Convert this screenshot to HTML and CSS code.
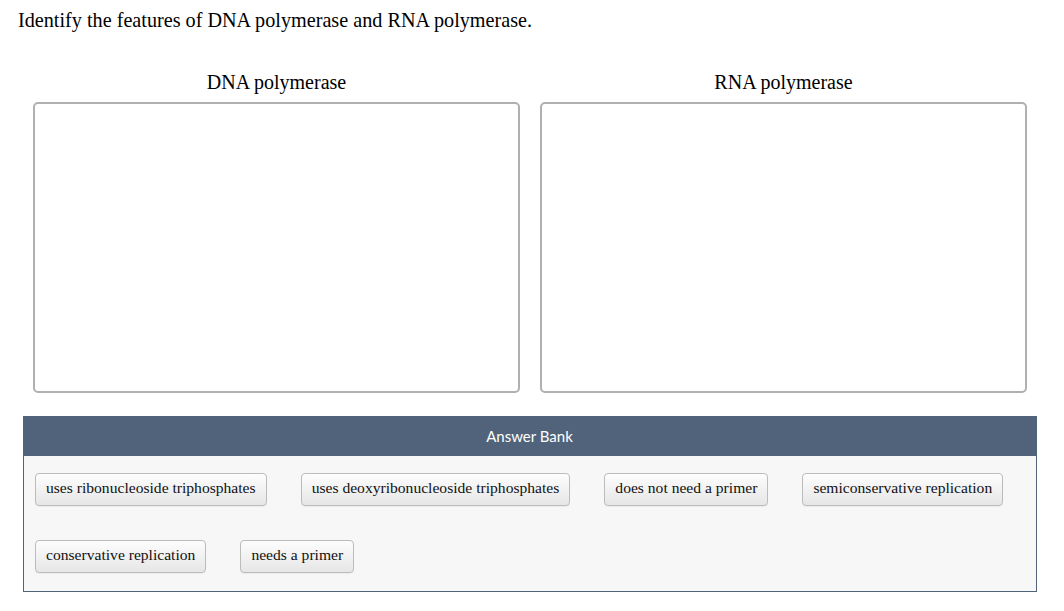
FILE: index.html
```html
<!DOCTYPE html>
<html lang="en">
<head>
  <meta charset="UTF-8">
  <title>DNA and RNA polymerase</title>
  <link rel="stylesheet" href="styles.css">
</head>
<body>
  <p class="question">Identify the features of DNA polymerase and RNA polymerase.</p>

  <div class="columns">
    <div class="column">
      <h2>DNA polymerase</h2>
      <div class="dropzone"></div>
    </div>
    <div class="column">
      <h2>RNA polymerase</h2>
      <div class="dropzone"></div>
    </div>
  </div>

  <div class="bank">
    <div class="bank-header">Answer Bank</div>
    <div class="bank-body">
      <div class="chip">uses ribonucleoside triphosphates</div>
      <div class="chip">uses deoxyribonucleoside triphosphates</div>
      <div class="chip">does not need a primer</div>
      <div class="chip">semiconservative replication</div>
      <div class="chip">conservative replication</div>
      <div class="chip">needs a primer</div>
    </div>
  </div>
</body>
</html>
```

FILE: styles.css
```css
body {
  font-family: "Liberation Serif", "Times New Roman", serif;
  color: #000;
  background: #fff;
  margin: 0;
}
.question {
  font-size: 20.2px;
  margin: 0;
  padding: 9px 18px 0;
  line-height: 23px;
}
.columns {
  display: flex;
  gap: 20px;
  margin: 38px 37px 0 33px;
}
.column {
  flex: 1;
}
.column h2 {
  font-size: 20px;
  font-weight: normal;
  text-align: center;
  margin: 0 0 8px;
  line-height: 24px;
}
.dropzone {
  height: 287px;
  border: 2px solid #b0b0b0;
  border-radius: 5px;
  background: #fff;
}
.bank {
  margin: 23px 0 0 23px;
  width: 1014px;
  box-sizing: border-box;
  border: 1px solid #50637a;
  border-top: none;
  background: #f7f7f7;
}
.bank-header {
  background: #50637a;
  color: #fff;
  font-family: Lato, "Open Sans", sans-serif;
  font-size: 15px;
  height: 40px;
  line-height: 40px;
  text-align: center;
  margin-left: -1px;
}
.bank-body {
  display: flex;
  flex-wrap: wrap;
  gap: 34px 34px;
  padding: 17px 11px 18px;
}
.chip {
  font-size: 15.6px;
  color: #111;
  height: 31px;
  line-height: 28px;
  padding: 0 10px;
  border: 1px solid #bcbcbc;
  border-radius: 4px;
  background: linear-gradient(#fdfdfd, #e6e6e6);
  box-shadow: 0 1px 1px rgba(0,0,0,0.05);
}
```
